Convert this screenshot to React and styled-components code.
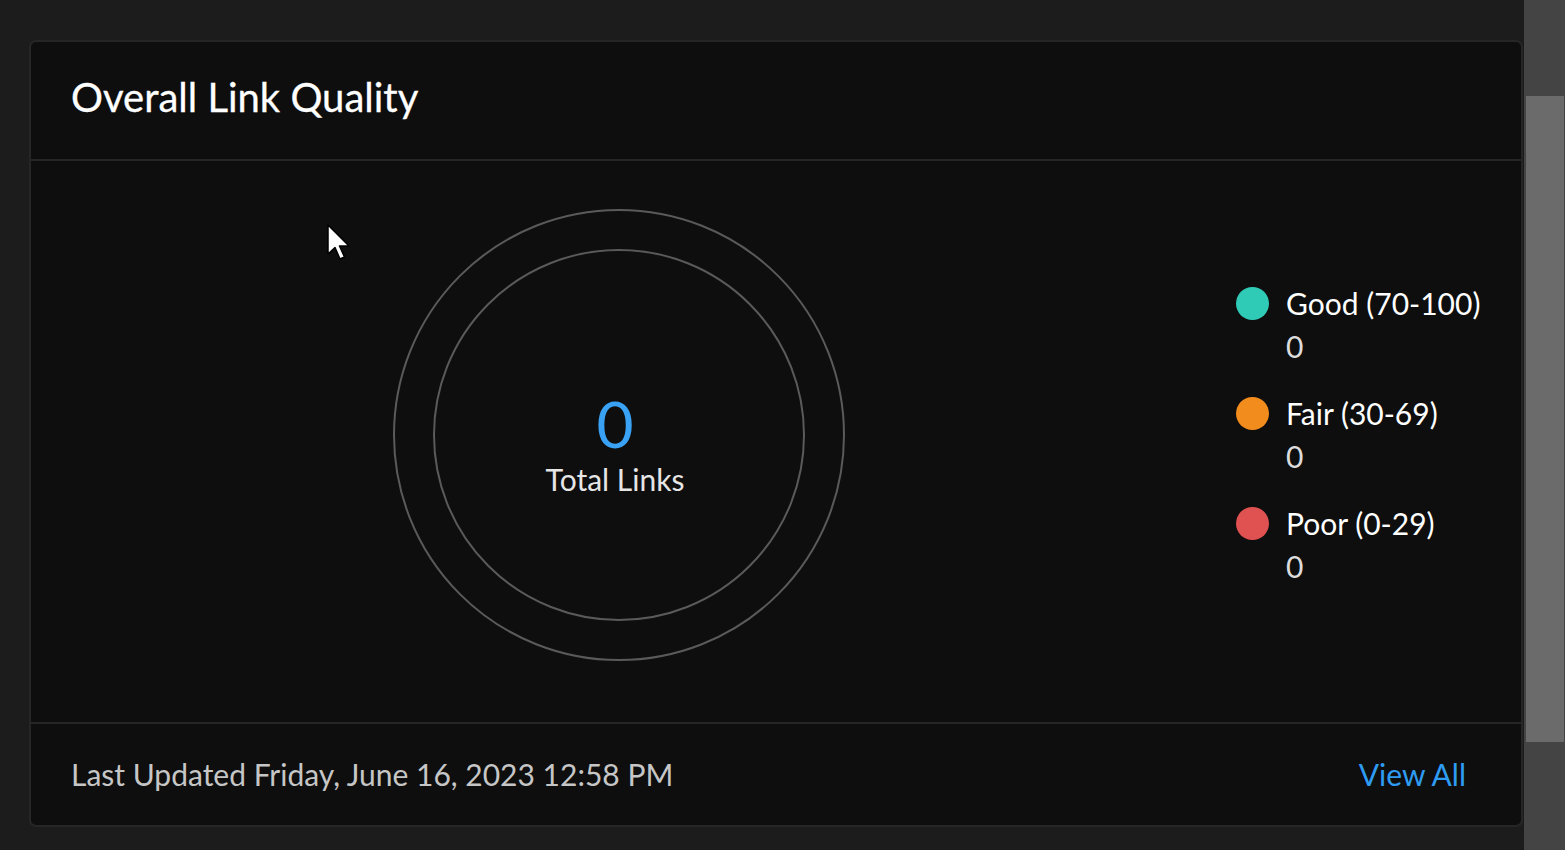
import React from 'react';
import styled, { createGlobalStyle } from 'styled-components';

const GlobalStyle = createGlobalStyle`
  html, body {
    margin: 0;
    padding: 0;
    background: #1c1c1c;
    font-family: Lato, "Open Sans", sans-serif;
    overflow: hidden;
  }
`;

const legend = [
  { label: 'Good (70-100)', value: 0, color: '#30cbb6' },
  { label: 'Fair (30-69)', value: 0, color: '#f28c1c' },
  { label: 'Poor (0-29)', value: 0, color: '#e05151' },
];

const App = () => {
  return (
    <>
      <GlobalStyle />
      <Page>
        <Main>
          <Card>
            <CardHeader>
              <Title>Overall Link Quality</Title>
            </CardHeader>
            <CardBody>
              <ChartWrap>
                <svg width="452" height="452" viewBox="0 0 452 452">
                  <circle cx="226" cy="226" r="225" fill="none" stroke="#5a5a5a" strokeWidth="2" />
                  <circle cx="226" cy="226" r="185" fill="none" stroke="#5a5a5a" strokeWidth="2" />
                </svg>
                <ChartCenter>
                  <TotalNumber>0</TotalNumber>
                  <TotalLabel>Total Links</TotalLabel>
                </ChartCenter>
              </ChartWrap>
              <Legend>
                {legend.map((item) => (
                  <LegendItem key={item.label}>
                    <Dot $color={item.color} />
                    <LegendText>
                      <LegendLabel>{item.label}</LegendLabel>
                      <LegendValue>{item.value}</LegendValue>
                    </LegendText>
                  </LegendItem>
                ))}
              </Legend>
            </CardBody>
            <CardFooter>
              <Updated>Last Updated Friday, June 16, 2023 12:58 PM</Updated>
              <ViewAll href="#">View All</ViewAll>
            </CardFooter>
          </Card>
        </Main>
        <ScrollTrack>
          <ScrollThumb />
        </ScrollTrack>
        <Cursor width="24" height="38" viewBox="0 0 24 38">
          <path d="M1 1 L1 30 L8 23.5 L13 35 L17.5 33 L12.5 22 L22 22 Z" fill="#ffffff" stroke="#000000" strokeWidth="1.5" strokeLinejoin="round" />
        </Cursor>
      </Page>
    </>
  );
};

export default App;

const Page = styled.div`
  position: relative;
  display: flex;
  width: 1565px;
  height: 850px;
  background: #1c1c1c;
`;

const Main = styled.div`
  flex: 1;
  padding: 40px 1px 0 29px;
`;

const Card = styled.div`
  background: #0e0e0e;
  border: 2px solid #262626;
  border-radius: 7px;
  display: flex;
  flex-direction: column;
  height: 787px;
  box-sizing: border-box;
`;

const CardHeader = styled.div`
  height: 109px;
  display: flex;
  align-items: center;
  padding: 0 0 8px 40px;
  border-bottom: 2px solid #262626;
`;

const Title = styled.h2`
  margin: 0;
  font-size: 40px;
  font-weight: 400;
  color: #ffffff;
  -webkit-text-stroke: 0.3px #ffffff;
`;

const CardBody = styled.div`
  flex: 1;
  display: flex;
  align-items: center;
  padding: 0 0 14px 362px;
`;

const ChartWrap = styled.div`
  position: relative;
  width: 452px;
  height: 452px;

  svg {
    display: block;
  }
`;

const ChartCenter = styled.div`
  position: absolute;
  inset: 0;
  display: flex;
  flex-direction: column;
  align-items: center;
  justify-content: center;
  padding: 20px 8px 0 0;
`;

const TotalNumber = styled.div`
  font-size: 64px;
  line-height: 1;
  color: #3aa2f5;
`;

const TotalLabel = styled.div`
  font-size: 30px;
  color: #e6e6e6;
  margin-top: 5px;
`;

const Legend = styled.div`
  margin-left: 391px;
  display: flex;
  flex-direction: column;
  gap: 34px;
`;

const LegendItem = styled.div`
  display: flex;
  align-items: flex-start;
  gap: 17px;
`;

const Dot = styled.span`
  width: 33px;
  height: 33px;
  border-radius: 50%;
  background: ${(p) => p.$color};
  flex-shrink: 0;
`;

const LegendText = styled.div`
  display: flex;
  flex-direction: column;
`;

const LegendLabel = styled.div`
  font-size: 30px;
  line-height: 33px;
  color: #ffffff;
`;

const LegendValue = styled.div`
  font-size: 30px;
  line-height: 33px;
  margin-top: 10px;
  color: #dcdcdc;
`;

const CardFooter = styled.div`
  height: 99px;
  border-top: 2px solid #262626;
  display: flex;
  align-items: center;
  justify-content: space-between;
  padding: 0 55px 2px 40px;
`;

const Updated = styled.span`
  font-size: 30px;
  color: #c6c6c6;
`;

const ViewAll = styled.a`
  font-size: 30px;
  color: #2e9cf2;
  text-decoration: none;
`;

const ScrollTrack = styled.div`
  width: 41px;
  background: #444444;
  padding-top: 96px;
  display: flex;
  justify-content: center;
`;

const ScrollThumb = styled.div`
  width: 38px;
  height: 646px;
  background: #6b6b6b;
`;

const Cursor = styled.svg`
  position: absolute;
  left: 327px;
  top: 224px;
  pointer-events: none;
`;
